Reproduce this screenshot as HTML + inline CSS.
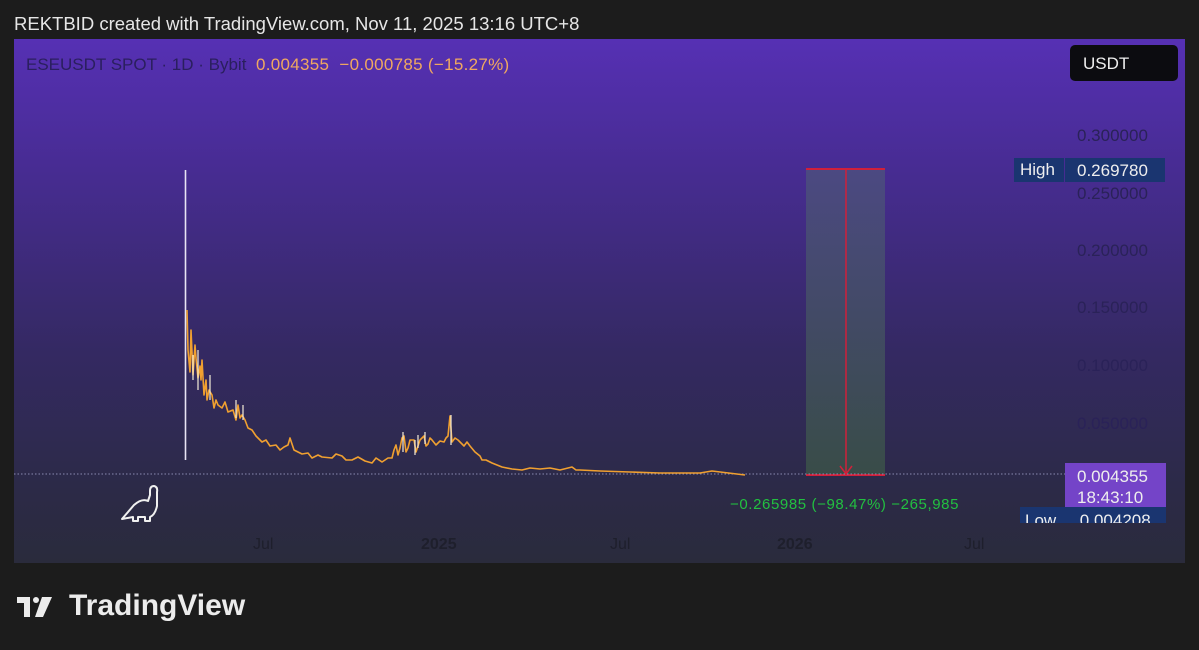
<!DOCTYPE html>
<html><head><meta charset="utf-8"><style>
*{margin:0;padding:0;box-sizing:border-box}
body{width:1199px;height:650px;background:#1c1c1c;font-family:"Liberation Sans",sans-serif;position:relative;overflow:hidden}
.t{position:absolute;white-space:nowrap}
</style></head><body>
<div class="t" style="left:14px;top:13px;font-size:18.5px;color:#e6e6e6">REKTBID created with TradingView.com, Nov 11, 2025 13:16 UTC+8</div>
<svg width="1199" height="650" style="position:absolute;left:0;top:0">
<defs>
<linearGradient id="bg" x1="0" y1="0" x2="0" y2="1">
<stop offset="0" stop-color="#5630b4"/>
<stop offset="0.25" stop-color="#472c92"/>
<stop offset="0.6" stop-color="#342962"/>
<stop offset="0.85" stop-color="#2c2a48"/>
<stop offset="1" stop-color="#2a2b3c"/>
</linearGradient>
<linearGradient id="gb" x1="0" y1="0" x2="0" y2="1">
<stop offset="0" stop-color="#4c4c80"/>
<stop offset="1" stop-color="#3a5048"/>
</linearGradient>
</defs>
<rect x="14" y="39" width="1171" height="524" fill="url(#bg)"/>
<rect x="806" y="169" width="79" height="306" fill="url(#gb)" opacity="0.9"/>
<line x1="806" y1="169" x2="885" y2="169" stroke="#d0203a" stroke-width="2"/>
<line x1="806" y1="475" x2="885" y2="475" stroke="#d0203a" stroke-width="2"/>
<line x1="846" y1="169" x2="846" y2="474" stroke="#d0203a" stroke-width="1.5"/>
<path d="M840 466 L846 474 L852 466" stroke="#d0203a" stroke-width="1.5" fill="none"/>
<line x1="14" y1="474" x2="1065" y2="474" stroke="#8a8ab0" stroke-width="1" stroke-dasharray="1.5 2"/>
<line x1="185.5" y1="170" x2="185.5" y2="460" stroke="#e8e4f4" stroke-width="1.6"/>
<path d="M187 310 L188 350 L190 372 L191 330 L193 375 L195 345 L196 358 L198 378 L200 366 L201 380 L202 360 L204 395 L206 380 L207 400 L209 390 L212 395 L214 408 L216 400 L218 405 L222 408 L225 402 L228 412 L233 410 L236 420 L238 405 L240 418 L242 415 L245 420 L248 428 L252 430 L256 436 L262 442 L266 440 L270 446 L276 445 L280 450 L284 447 L288 445 L290 438 L292 444 L294 450 L302 454 L308 453 L312 458 L318 455 L322 457 L332 458 L336 454 L342 456 L346 460 L352 460 L358 457 L365 461 L372 463 L376 458 L382 462 L388 458 L392 458 L394 450 L396 445 L398 455 L400 448 L402 438 L404 436 L406 452 L408 448 L410 440 L414 440 L416 452 L418 446 L420 440 L424 436 L426 446 L428 444 L430 438 L432 440 L436 445 L440 441 L444 442 L446 438 L448 436 L450 416 L452 442 L455 438 L458 440 L462 444 L464 446 L467 442 L470 446 L475 452 L480 456 L482 460 L486 460 L492 463 L502 467 L512 469 L522 470 L530 468 L540 469 L550 468 L560 470 L568 468 L572 467 L576 470 L580 470 L600 471 L630 472 L660 473 L700 473 L712 471 L745 475" stroke="#f0a030" stroke-width="1.6" fill="none" stroke-linejoin="round"/>
<path d="M193 355 L193 380 M198 350 L198 390 M210 375 L210 400 M236 400 L236 418 M243 405 L243 420 M403 432 L403 452 M418 435 L418 448 M451 415 L451 445 M415 440 L415 455 M425 432 L425 444" stroke="#f4ecd8" stroke-width="1.2"/>
<g fill="none" stroke="#f0f0f0" stroke-width="2" stroke-linejoin="round">
<path d="M122 519 L134 505 Q142 498 148 501 L150 495 L150 491 Q150 486 154 486 Q158 487 157 492 L157 506 Q155 515 150 517 L150 521 L145 521 L145 517 L138 517 L138 521 L133 521 L133 517 Z"/>
</g>
<g fill="#ececec">
<path d="M17 597 H30 V617 H24 V603 H17 Z"/><circle cx="36" cy="600" r="3"/><path d="M42 597 H52 L43 617 H35 Z"/>
</g>
</svg>
<div class="t" style="left:26px;top:55px;font-size:17px;color:#2a1f5e">ESEUSDT SPOT · 1D · Bybit</div>
<div class="t" style="left:256px;top:55px;font-size:17px;color:#f0a860;letter-spacing:0.3px">0.004355 &nbsp;−0.000785 (−15.27%)</div>
<div class="t" style="left:1070px;top:45px;width:108px;height:36px;background:#0c0c10;border-radius:5px;color:#eee;font-size:17px;padding:9px 0 0 13px">USDT</div>
<div class="t" style="left:1077px;top:126px;font-size:17px;color:#2a2258">0.300000</div>
<div class="t" style="left:1077px;top:184px;font-size:17px;color:#2a2258">0.250000</div>
<div class="t" style="left:1077px;top:241px;font-size:17px;color:#2a2258">0.200000</div>
<div class="t" style="left:1077px;top:298px;font-size:17px;color:#2a2258">0.150000</div>
<div class="t" style="left:1077px;top:356px;font-size:17px;color:#2a2258">0.100000</div>
<div class="t" style="left:1077px;top:414px;font-size:17px;color:#2a2258">0.050000</div>
<div class="t" style="left:1014px;top:158px;width:50px;height:24px;background:#1a3570;color:#eee;font-size:17px;padding:2px 0 0 6px">High</div>
<div class="t" style="left:1065px;top:158px;width:100px;height:24px;background:#1a3570;color:#eee;font-size:17px;padding:3px 0 0 12px">0.269780</div>
<div class="t" style="left:1065px;top:463px;width:101px;height:44px;background:#7444c8;color:#eee;font-size:17px;line-height:21px;padding:3px 0 0 12px">0.004355<br>18:43:10</div>
<div class="t" style="left:1020px;top:507px;width:146px;height:16px;background:#1a3570;color:#eee;font-size:17px;overflow:hidden;line-height:28px;padding-left:5px">Low&nbsp;&nbsp;&nbsp;&nbsp;&nbsp;0.004208</div>
<div class="t" style="left:730px;top:496px;font-size:15px;color:#22c040;letter-spacing:0.6px">−0.265985 (−98.47%) −265,985</div>
<div class="t" style="left:253px;top:536px;font-size:16px;color:#1e1f2c">Jul</div>
<div class="t" style="left:421px;top:536px;font-size:16px;font-weight:bold;color:#1e1f2c">2025</div>
<div class="t" style="left:610px;top:536px;font-size:16px;color:#1e1f2c">Jul</div>
<div class="t" style="left:777px;top:536px;font-size:16px;font-weight:bold;color:#1e1f2c">2026</div>
<div class="t" style="left:964px;top:536px;font-size:16px;color:#1e1f2c">Jul</div>
<div class="t" style="left:69px;top:589px;font-size:30px;font-weight:bold;color:#ececec">TradingView</div>
</body></html>
